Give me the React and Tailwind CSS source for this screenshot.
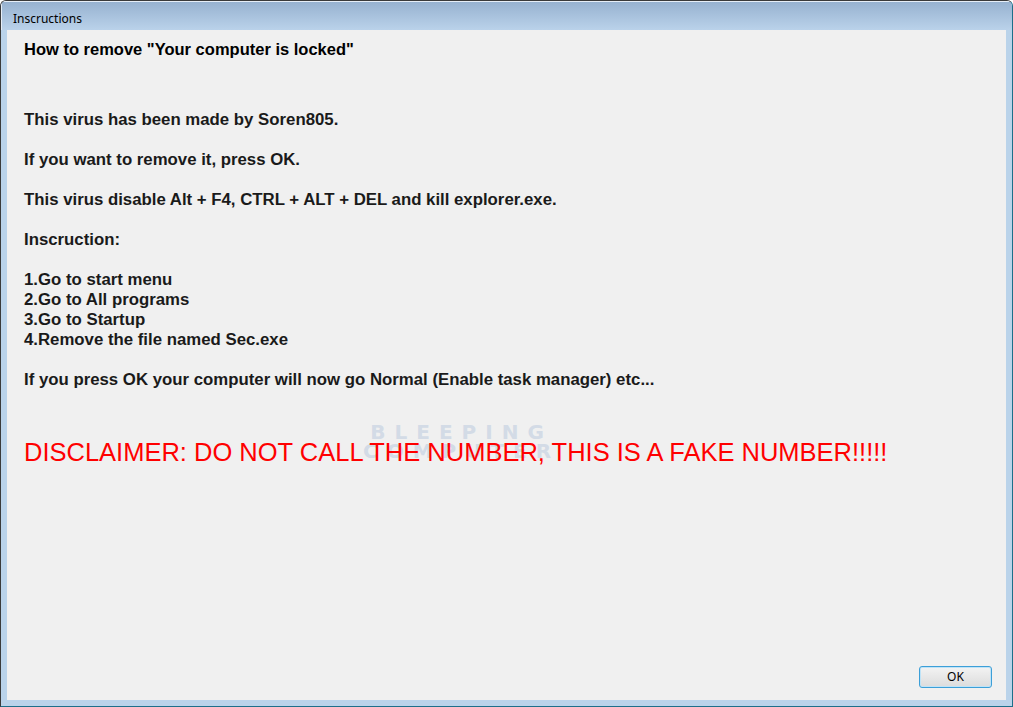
import React from "react";

export default function App() {
  const body = [
    "This virus has been made by Soren805.",
    "",
    "If you want to remove it, press OK.",
    "",
    "This virus disable Alt + F4, CTRL + ALT + DEL and kill explorer.exe.",
    "",
    "Inscruction:",
    "",
    "1.Go to start menu",
    "2.Go to All programs",
    "3.Go to Startup",
    "4.Remove the file named Sec.exe",
    "",
    "If you press OK your computer will now go Normal (Enable task manager) etc...",
  ];
  return (
    <div className="w-[1013px] h-[707px] bg-white" style={{ fontFamily: '"Liberation Sans", Arial, sans-serif' }}>
      <div className="w-full h-full flex flex-col rounded-t-[6px] border border-[#3a3a3a] border-r-[#1d6f8a] border-b-[#1d6f8a] bg-[#bad3ea] overflow-hidden">
        <div className="h-[29px] shrink-0 flex items-center pl-[11px] pt-[6px] bg-gradient-to-b from-[#97b2d0] to-[#bad2ea] border-t border-l border-[#e6eef7]">
          <span className="text-[12px] text-black" style={{ fontFamily: '"Noto Sans", "Liberation Sans", sans-serif' }}>Inscructions</span>
        </div>
        <div className="flex-1 mx-[6px] mb-[6px] bg-[#f0f0f0] relative flex flex-col pl-[17px] pt-[9px]">
          <div className="text-[16.5px] leading-[20px] font-bold text-black">How to remove "Your computer is locked"</div>
          <div className="mt-[51px] text-[16.8px] leading-[20px] font-bold text-[#1a1a1a]">
            {body.map((l, i) => (
              <div key={i} className="h-[20px] whitespace-pre">{l}</div>
            ))}
          </div>
          <div className="absolute left-[356px] top-[393px] flex flex-col items-center text-[#d3dbe6] font-bold text-[20px] leading-[19px] tracking-[9px]" style={{ fontFamily: '"DejaVu Sans", sans-serif' }}>
            <span>BLEEPING</span>
            <span>COMPUTER</span>
          </div>
          <div className="mt-[48px] text-[25.5px] leading-[28px] text-[#ff0000] relative whitespace-nowrap">DISCLAIMER: DO NOT CALL THE NUMBER, THIS IS A FAKE NUMBER!!!!!</div>
          <div className="flex-1" />
          <div className="flex justify-end pr-[14px] pb-[12px]">
            <button className="w-[73px] h-[22px] rounded-[3px] border border-[#3c9fd8] bg-gradient-to-b from-[#f3f3f3] to-[#dcdcdc] text-[12px] text-black flex items-center justify-center shadow-[inset_0_0_0_1px_#bfe3f7]" style={{ fontFamily: '"Noto Sans", "Liberation Sans", sans-serif' }}>OK</button>
          </div>
        </div>
      </div>
    </div>
  );
}
